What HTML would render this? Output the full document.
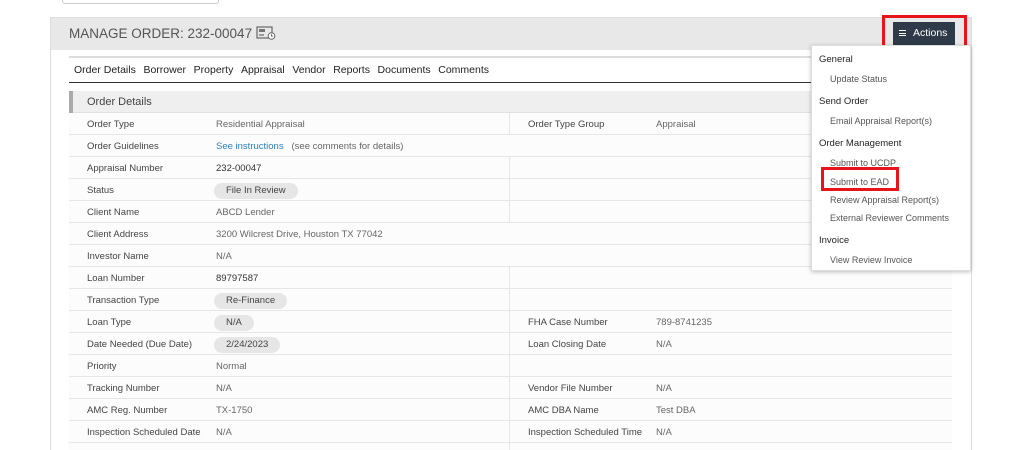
<!DOCTYPE html>
<html style="height:450px;overflow:hidden"><head><style>
*{margin:0;padding:0;box-sizing:border-box}
body{width:1024px;height:450px;overflow:hidden;background:#fff;font-family:"Liberation Sans",sans-serif;position:relative;color:#444}
.abs{position:absolute}
.topbtn{left:62px;top:-6px;width:157px;height:10px;border:1px solid #ccc;border-radius:3px;background:#fff}
.panel{left:50px;top:17px;width:922px;height:440px;border:1px solid #ddd;background:#fff}
.hdr{left:51px;top:18px;width:920px;height:32px;background:#e8e8e8}
.title{left:69px;top:26px;font-size:13.5px;color:#555}
.tabs{left:74px;top:64px;font-size:10.5px;color:#222}
.tabs span{margin-right:7.6px}
.row{position:absolute;left:69px;width:883px;height:22px;border-bottom:1px solid #e6e6e6;background:#fcfcfc;font-size:9.5px}
.row .l{position:absolute;left:18px;top:6px;color:#444}
.row .v{position:absolute;left:147px;top:6px;color:#666}
.row .l2{position:absolute;left:459px;top:6px;color:#444}
.row .v2{position:absolute;left:587px;top:6px;color:#666}
.row .div{position:absolute;left:440px;top:0;width:1px;height:22px;background:#e6e6e6}
.pill{position:absolute;left:145px;top:4px;height:16px;padding:2px 12px;border-radius:8px;background:#e6e6e6;color:#444;font-size:9.5px}
b{font-weight:normal;color:#333}
.menu{left:811px;top:45px;width:160px;height:226px;background:#fff;border:1px solid #ddd;box-shadow:0 1px 4px rgba(0,0,0,.25);font-size:9px}
.menu .g{position:absolute;left:7px;font-size:9.5px;color:#222}
.menu .i{position:absolute;left:18px;color:#555}
</style></head><body>
<div class="abs topbtn"></div>
<div class="abs panel"></div>
<div class="abs hdr"></div>
<div class="abs title">MANAGE ORDER: 232-00047 <svg width="20" height="14" viewBox="0 0 20 14" style="vertical-align:-2px"><rect x="1" y="1" width="15" height="11" fill="none" stroke="#666" stroke-width="1.2"/><rect x="3" y="3" width="6" height="3" fill="#777"/><rect x="3" y="8" width="5" height="2" fill="#999"/><circle cx="15.5" cy="10" r="3.3" fill="#fff" stroke="#666"/><path d="M15.5 8.3v1.8h1.4" stroke="#666" fill="none"/></svg></div>
<div class="abs" style="left:69px;top:56px;width:883px;height:2px;background:#ddd"></div>
<div class="abs tabs"><span>Order Details</span><span>Borrower</span><span>Property</span><span>Appraisal</span><span>Vendor</span><span>Reports</span><span>Documents</span><span>Comments</span></div>
<div class="abs" style="left:69px;top:82px;width:883px;height:1px;background:#333"></div>
<div class="abs" style="left:69px;top:91px;width:883px;height:22px;background:#efefef;border-bottom:1px solid #e0e0e0"></div>
<div class="abs" style="left:69px;top:91px;width:4px;height:22px;background:#aaa"></div>
<div class="abs" style="left:87px;top:96px;font-size:11px;color:#444">Order Details</div>

<div class="row" style="top:113px"><div class="l">Order Type</div><div class="v">Residential Appraisal</div><div class="div"></div><div class="l2">Order Type Group</div><div class="v2">Appraisal</div></div>
<div class="row" style="top:135px"><div class="l">Order Guidelines</div><div class="v"><span style="color:#2a7fc1">See instructions</span>&nbsp;&nbsp; (see comments for details)</div></div>
<div class="row" style="top:157px"><div class="l">Appraisal Number</div><div class="v"><b>232-00047</b></div><div class="div"></div></div>
<div class="row" style="top:179px"><div class="l">Status</div><div class="pill">File In Review</div><div class="div"></div></div>
<div class="row" style="top:201px"><div class="l">Client Name</div><div class="v">ABCD Lender</div><div class="div"></div></div>
<div class="row" style="top:223px"><div class="l">Client Address</div><div class="v">3200 Wilcrest Drive, Houston TX 77042</div></div>
<div class="row" style="top:245px"><div class="l">Investor Name</div><div class="v">N/A</div></div>
<div class="row" style="top:267px"><div class="l">Loan Number</div><div class="v"><b>89797587</b></div><div class="div"></div></div>
<div class="row" style="top:289px"><div class="l">Transaction Type</div><div class="pill">Re-Finance</div><div class="div"></div></div>
<div class="row" style="top:311px"><div class="l">Loan Type</div><div class="pill">N/A</div><div class="div"></div><div class="l2">FHA Case Number</div><div class="v2">789-8741235</div></div>
<div class="row" style="top:333px"><div class="l">Date Needed (Due Date)</div><div class="pill">2/24/2023</div><div class="div"></div><div class="l2">Loan Closing Date</div><div class="v2">N/A</div></div>
<div class="row" style="top:355px"><div class="l">Priority</div><div class="v">Normal</div><div class="div"></div></div>
<div class="row" style="top:377px"><div class="l">Tracking Number</div><div class="v">N/A</div><div class="div"></div><div class="l2">Vendor File Number</div><div class="v2">N/A</div></div>
<div class="row" style="top:399px"><div class="l">AMC Reg. Number</div><div class="v">TX-1750</div><div class="div"></div><div class="l2">AMC DBA Name</div><div class="v2">Test DBA</div></div>
<div class="row" style="top:421px"><div class="l">Inspection Scheduled Date</div><div class="v">N/A</div><div class="div"></div><div class="l2">Inspection Scheduled Time</div><div class="v2">N/A</div></div>
<div class="row" style="top:443px"><div class="l">Inspection Completed Date</div><div class="div"></div><div class="l2">Inspection Completed Time</div></div>

<div class="abs" style="left:882px;top:15px;width:85px;height:34px;border:3px solid #e8141b"></div>
<div class="abs" style="left:893px;top:22px;width:62px;height:23px;background:#2e3a47;color:#fff;font-size:10.5px;padding:5px 0 0 20px">Actions</div>
<div class="abs" style="left:899px;top:30px;width:7px;height:6px;border-top:1.5px solid #fff;border-bottom:1.5px solid #fff"></div>
<div class="abs" style="left:899px;top:32.5px;width:7px;height:1.5px;background:#fff"></div>
<div class="abs menu">
<div class="g" style="top:8px">General</div>
<div class="i" style="top:28px">Update Status</div>
<div class="g" style="top:50px">Send Order</div>
<div class="i" style="top:70px">Email Appraisal Report(s)</div>
<div class="g" style="top:92px">Order Management</div>
<div class="i" style="top:112px">Submit to UCDP</div>
<div class="i" style="top:131px">Submit to EAD</div>
<div class="i" style="top:149px">Review Appraisal Report(s)</div>
<div class="i" style="top:167px">External Reviewer Comments</div>
<div class="g" style="top:189px">Invoice</div>
<div class="i" style="top:209px">View Review Invoice</div>
</div>
<div class="abs" style="left:821px;top:167px;width:78px;height:24px;border:3px solid #e8141b"></div>
</body></html>
